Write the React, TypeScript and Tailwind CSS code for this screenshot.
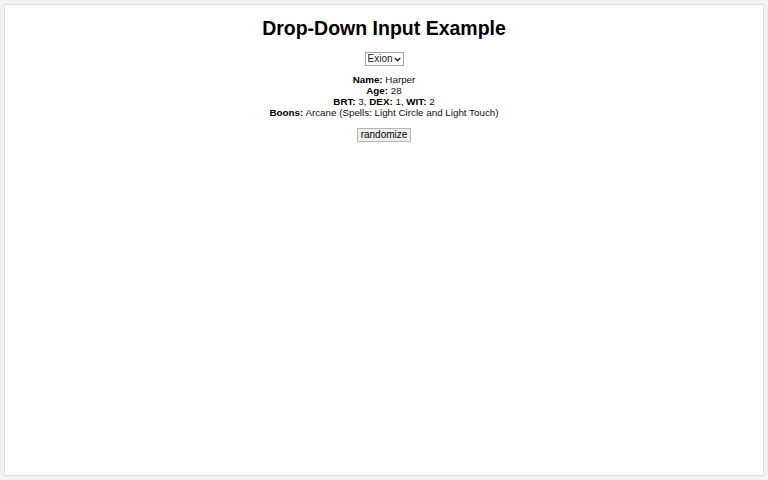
import { useState } from 'react';

type Character = {
    name: string;
    age: number;
    brt: number;
    dex: number;
    wit: number;
    boons: string;
};

const OPTIONS = ['Exion', 'Harper', 'Vesk'];

const INITIAL: Character = {
    name: 'Harper',
    age: 28,
    brt: 3,
    dex: 1,
    wit: 2,
    boons: 'Arcane (Spells: Light Circle and Light Touch)',
};

export default function App() {
    const [choice, setChoice] = useState('Exion');
    const [character, setCharacter] = useState<Character>(INITIAL);

    // Shuffle the stats a bit
    const randomize = () => {
        setCharacter((c) => ({
            ...c,
            age: 18 + Math.floor(Math.random() * 30),
            brt: 1 + Math.floor(Math.random() * 3),
            dex: 1 + Math.floor(Math.random() * 3),
            wit: 1 + Math.floor(Math.random() * 3),
        }));
    };

    return (
        <div className="w-[768px] h-[480px] bg-[#f3f3f3] p-[4px] font-['Liberation_Sans',Arial,sans-serif] text-black">
            <div className="h-full bg-white border border-[#dcdcdc] flex flex-col items-center">
                <h1 className="mt-[12px] text-[19.5px] leading-[22px] font-bold">Drop-Down Input Example</h1>

                <div className="relative mt-[13px] h-[14px] w-[39px]">
                    <select
                        value={choice}
                        onChange={(e) => setChoice(e.target.value)}
                        className="block appearance-none w-full h-full text-[10px] leading-[12px] border border-[#a8a8a8] bg-white pl-[2px] pr-[10px] py-0 text-[#222]"
                    >
                        {OPTIONS.map((o) => (
                            <option key={o} value={o}>
                                {o}
                            </option>
                        ))}
                    </select>
                    <svg
                        className="absolute right-[3px] top-[5px] pointer-events-none"
                        width="7"
                        height="5"
                        viewBox="0 0 7 5"
                        fill="none"
                        stroke="#222"
                        strokeWidth="1.4"
                    >
                        <path d="M0.8 1 L3.5 3.8 L6.2 1" />
                    </svg>
                </div>

                {/* Character sheet */}
                <div className="mt-[8px] text-[9.8px] leading-[11px] text-center text-[#111]">
                    <div>
                        <b className="text-black">Name:</b> {character.name}
                    </div>
                    <div>
                        <b className="text-black">Age:</b> {character.age}
                    </div>
                    <div>
                        <b className="text-black">BRT:</b> {character.brt}, <b className="text-black">DEX:</b>{' '}
                        {character.dex}, <b className="text-black">WIT:</b> {character.wit}
                    </div>
                    <div>
                        <b className="text-black">Boons:</b> {character.boons}
                    </div>
                </div>

                <button
                    onClick={randomize}
                    className="mt-[10px] h-[14px] w-[54px] text-[10px] leading-[12px] bg-[#efefef] border border-[#b5b5b5]"
                >
                    randomize
                </button>
            </div>
        </div>
    );
}
